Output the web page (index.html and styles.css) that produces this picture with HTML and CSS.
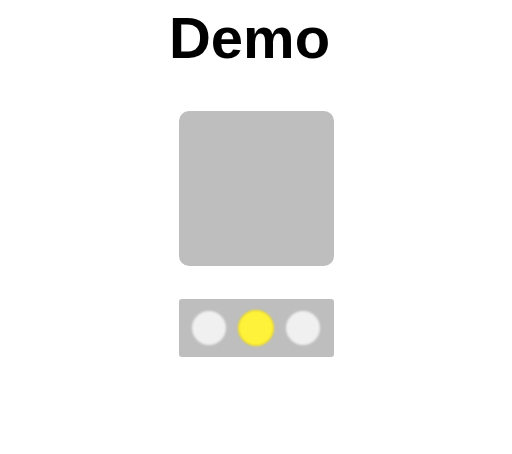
FILE: index.html
```html
<!DOCTYPE html>
<html>
<head>
<meta charset="utf-8">
<link rel="stylesheet" href="styles.css">
</head>
<body>
<div class="page">
  <h1 class="title">Demo</h1>
  <div class="screen"></div>
  <div class="lights">
    <span class="light"></span>
    <span class="light on"></span>
    <span class="light"></span>
  </div>
</div>
</body>
</html>
```
FILE: styles.css
```css
html, body {
  margin: 0;
  padding: 0;
  background: #ffffff;
}
.page {
  display: flex;
  flex-direction: column;
  align-items: center;
  padding-top: 5px;
}
.title {
  margin: 0 13px 0 0;
  font-family: "Liberation Sans", Arial, sans-serif;
  font-weight: bold;
  font-size: 58px;
  line-height: 66px;
  color: #000;
}
.screen {
  margin-top: 40px;
  width: 155px;
  height: 155px;
  border-radius: 10px;
  background: #bdbebd;
}
.lights {
  margin-top: 33px;
  width: 155px;
  height: 58px;
  border-radius: 3px;
  background: #bdbebd;
  display: flex;
  align-items: center;
  justify-content: center;
  gap: 13px;
}
.light {
  width: 34px;
  height: 34px;
  border-radius: 50%;
  background: #f0f0f0;
  filter: blur(1px);
}
.light.on {
  background: #fff23a;
  box-shadow: 0 0 0 1px #f2dc10;
}
```
